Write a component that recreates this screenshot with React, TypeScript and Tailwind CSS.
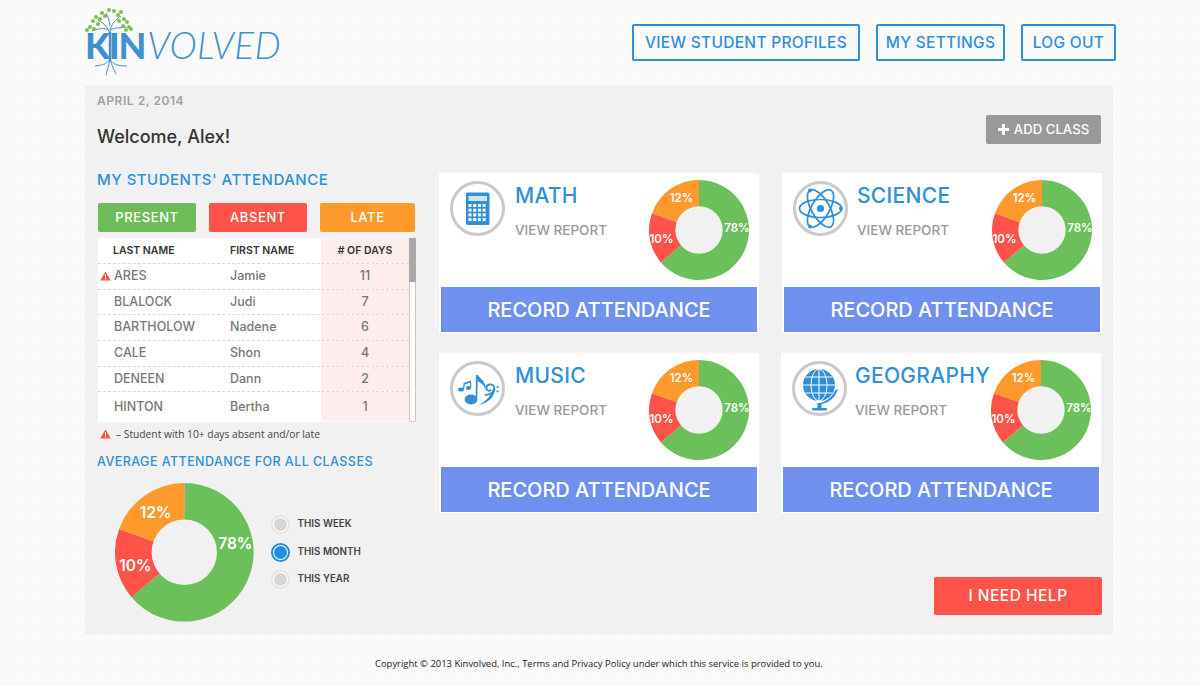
import type { ReactNode } from 'react'

const students = [
  { last: 'ARES', first: 'Jamie', days: 11, flag: true },
  { last: 'BLALOCK', first: 'Judi', days: 7 },
  { last: 'BARTHOLOW', first: 'Nadene', days: 6 },
  { last: 'CALE', first: 'Shon', days: 4 },
  { last: 'DENEEN', first: 'Dann', days: 2 },
  { last: 'HINTON', first: 'Bertha', days: 1 },
]

function polar(r: number, deg: number) {
  const a = ((deg - 90) * Math.PI) / 180
  return `${(r * Math.cos(a)).toFixed(2)} ${(r * Math.sin(a)).toFixed(2)}`
}

function slice(r: number, from: number, to: number) {
  const large = to - from > 180 ? 1 : 0
  return `M0 0 L${polar(r, from)} A${r} ${r} 0 ${large} 1 ${polar(r, to)} Z`
}

interface DonutProps {
  radius: number
  hole: number
  fontSize: number
  labels: [number, number][]
}

function Donut({ radius, hole, fontSize, labels }: DonutProps) {
  const texts = ['78%', '10%', '12%']
  return (
    <svg width={radius * 2} height={radius * 2} viewBox={`${-radius} ${-radius} ${radius * 2} ${radius * 2}`} className="shrink-0">
      <path d={slice(radius, 0, 229.6)} fill="#6cc05c" />
      <path d={slice(radius, 229.6, 289.7)} fill="#fd5349" />
      <path d={slice(radius, 289.7, 360)} fill="#fe9a2b" />
      <circle r={hole} fill="#f1f1f1" />
      {texts.map((t, i) => (
        <text
          key={t}
          x={labels[i][0]}
          y={labels[i][1]}
          fill="#fff"
          fontSize={fontSize}
          fontWeight={600}
          textAnchor="middle"
          dominantBaseline="central"
        >
          {t}
        </text>
      ))}
    </svg>
  )
}

function WarnIcon() {
  return (
    <svg width="11" height="10" viewBox="0 0 11 10" className="shrink-0">
      <path d="M5.5 0.4 L10.8 9.6 H0.2 Z" fill="#f2544a" />
      <rect x="5" y="3.2" width="1" height="3.4" fill="#fff" />
      <rect x="5" y="7.3" width="1" height="1.1" fill="#fff" />
    </svg>
  )
}

function CalcIcon() {
  const cells = []
  for (let r = 0; r < 4; r++) {
    for (let c = 0; c < 4; c++) {
      cells.push(<rect key={`${r}-${c}`} x={18.5 + c * 4.7} y={23 + r * 4.7} width="3" height="3" fill="#fff" />)
    }
  }
  return (
    <svg width="55" height="55" viewBox="0 0 55 55" className="shrink-0">
      <rect x="16" y="11.5" width="23.5" height="32.5" rx="1.5" fill="#2f8fd8" />
      <rect x="18.5" y="15" width="18.5" height="5" fill="#cfe5f6" />
      {cells}
    </svg>
  )
}

function AtomIcon() {
  return (
    <svg width="55" height="55" viewBox="0 0 55 55" fill="none" stroke="#2f8fd8" strokeWidth="1.7" className="shrink-0">
      <ellipse cx="27.5" cy="27.5" rx="21" ry="9" />
      <ellipse cx="27.5" cy="27.5" rx="21" ry="9" transform="rotate(60 27.5 27.5)" />
      <ellipse cx="27.5" cy="27.5" rx="21" ry="9" transform="rotate(120 27.5 27.5)" />
      <circle cx="27.5" cy="27.5" r="3.6" fill="#2f8fd8" stroke="none" />
      <circle cx="17" cy="9.5" r="1.9" fill="#2f8fd8" stroke="none" />
      <circle cx="48" cy="27.5" r="1.9" fill="#2f8fd8" stroke="none" />
      <circle cx="17" cy="45.5" r="1.9" fill="#2f8fd8" stroke="none" />
    </svg>
  )
}

function MusicIcon() {
  return (
    <svg width="55" height="55" viewBox="0 0 55 55" fill="#2f8fd8" className="shrink-0">
      <ellipse cx="21" cy="38.5" rx="6.4" ry="5" />
      <path d="M25.6 38 L26 14 L27.6 14 L34 21 L32.5 22.5 L27.8 18 L27.2 38 Z" />
      <path d="M27.5 15 C30 20 38 21 35 30 C35.5 24 31 22.5 27.8 20 Z" />
      <ellipse cx="11" cy="28.5" rx="2.9" ry="2.1" />
      <path d="M13 28 L13.6 22 L21 19.5 L21.4 26 L20.2 26 L19.9 21.8 L14.8 23.4 L14.2 28.5 Z" />
      <ellipse cx="18.6" cy="27" rx="2.6" ry="1.9" />
      <path
        d="M35 34 C41 34 46 30 44 25.5 C42.5 22 36.5 23 36.5 27 C36.5 30 40 30.5 41 28.5"
        fill="none"
        stroke="#2f8fd8"
        strokeWidth="1.8"
      />
      <path d="M44.5 27 C46 34 39 42 29 44 C36 40 42 34 43 27 Z" />
      <circle cx="47.5" cy="26" r="1.1" />
      <circle cx="47.5" cy="30.5" r="1.1" />
    </svg>
  )
}

function GlobeIcon() {
  return (
    <svg width="55" height="55" viewBox="0 0 55 55" fill="none" stroke="#fff" strokeWidth="1" className="shrink-0">
      <circle cx="27" cy="24" r="16" fill="#2f8fd8" stroke="none" />
      <ellipse cx="27" cy="24" rx="8" ry="16" />
      <path d="M27 8 V40 M11 24 H43 M13.5 16 H40.5 M13.5 32 H40.5" />
      <path d="M46 28 C43 38 35 44 24 43 C33 41.5 40 37 43.5 29 Z" fill="#2f8fd8" stroke="none" />
      <rect x="25.5" y="42" width="4" height="6" fill="#2f8fd8" stroke="none" />
      <rect x="20" y="47" width="15" height="2.4" rx="1" fill="#2f8fd8" stroke="none" />
    </svg>
  )
}

function TreeMark() {
  const leaves: [number, number][] = [
    [2, 22], [5, 19], [9, 21], [8, 13], [11, 9], [15, 11], [17, 5], [20, 8], [13, 16],
    [29, 3], [33, 7], [36, 4], [39, 11], [34, 13], [42, 14], [38, 18], [44, 19], [41, 22], [46, 21], [24, 2],
  ]
  return (
    <svg width="48" height="70" viewBox="0 0 48 70" className="absolute left-0 top-[8px]" fill="none">
      <path d="M25 52 V24" stroke="#3f92cf" strokeWidth="2.4" />
      <g stroke="#3f92cf" strokeWidth="1">
        <path d="M25 28 C24 20 20 16 13 12 M25 24 C26 16 30 12 36 8 M25 22 C28 20 34 20 41 19 M24 22 C20 20 14 20 7 23 M25 18 C24 12 23 8 21 5" />
        <path d="M25 51 C22 57 16 57 10 58 M25 51 C24 58 22 62 21 67 M25 51 C28 57 34 58 42 58 M25 51 C27 58 29 62 31 66" />
      </g>
      {leaves.map(([x, y]) => (
        <circle key={`${x}-${y}`} cx={x} cy={y} r="2" fill="#7fbf4d" />
      ))}
    </svg>
  )
}

function Logo() {
  return (
    <div className="relative h-[86px] w-[195px] shrink-0">
      <TreeMark />
      <div className="flex items-baseline pt-[21px] font-['Lato',sans-serif] leading-[48px] text-[#3f92cf]">
        <span className="text-[36px] font-black tracking-[-1.2px]">KIN</span>
        <span className="ml-[2px] text-[37px] font-light italic tracking-[0.3px]">VOLVED</span>
      </div>
    </div>
  )
}

function NavButton({ children, className }: { children: ReactNode; className: string }) {
  return (
    <a className={`flex h-[37px] items-center justify-center rounded-[2px] border-2 border-[#2f8fd8] text-[15.5px] font-medium tracking-[0.3px] text-[#2f8fd8] ${className}`}>
      {children}
    </a>
  )
}

function FilterButton({ children, className }: { children: ReactNode; className: string }) {
  return (
    <button className={`flex h-[29px] items-center justify-center rounded-[2px] text-[13px] font-medium tracking-[0.6px] text-white ${className}`}>
      {children}
    </button>
  )
}

function StudentTable() {
  return (
    <div className="relative mt-[6px] flex h-[184px] w-[318px] bg-white">
      <div className="w-[311px]">
        <div className="grid h-[26px] grid-cols-[132px_91px_88px] items-center border-b border-dashed border-[#d8d8d8] text-[10.5px] font-semibold text-[#333]">
          <span className="pl-[15px]">LAST NAME</span>
          <span>FIRST NAME</span>
          <span className="flex h-full items-center justify-center bg-[#fdeeed]"># OF DAYS</span>
        </div>
        {students.map((s, i) => (
          <div
            key={s.last}
            className={`relative grid grid-cols-[132px_91px_88px] items-center text-[12.5px] font-medium text-[#777] ${i < 5 ? 'h-[25.7px] border-b border-dashed border-[#d8d8d8]' : 'h-[29px]'}`}
          >
            {s.flag && (
              <span className="absolute left-[2px] top-[7px] flex">
                <WarnIcon />
              </span>
            )}
            <span className="pl-[16px]">{s.last}</span>
            <span>{s.first}</span>
            <span className="flex h-full items-center justify-center bg-[#fdeeed]">{s.days}</span>
          </div>
        ))}
      </div>
      <div className="w-[7px] rounded-[1px] border border-[#c9c9c9] bg-white">
        <div className="-m-px h-[44px] bg-[#a9a9a9]" />
      </div>
    </div>
  )
}

function RadioRow({ label, active }: { label: string; active?: boolean }) {
  return (
    <div className="flex h-[27.5px] items-center gap-[8px]">
      <span
        className={`flex h-[19px] w-[19px] items-center justify-center rounded-full border-2 bg-white ${active ? 'border-[#1f8fe0]' : 'border-[#e4e4e4]'}`}
      >
        <span className={`h-[13px] w-[13px] rounded-full ${active ? 'bg-[#1f8fe0]' : 'bg-[#d6d6d6]'}`} />
      </span>
      <span className="text-[9.8px] font-semibold text-[#444]">{label}</span>
    </div>
  )
}

interface ClassCardProps {
  title: string
  icon: ReactNode
  className?: string
  titleGap?: string
}

function ClassCard({ title, icon, className = '', titleGap = 'ml-[10px]' }: ClassCardProps) {
  return (
    <div className={`flex h-[160px] w-[320px] flex-col bg-white ${className}`}>
      <div className="flex flex-1 justify-between pr-[10px] pl-[11px] pt-[7px]">
        <div className="flex">
          <div className="mt-[1px] flex h-[55px] w-[55px] items-center justify-center rounded-full border-[3px] border-[#c9c9c9]">
            {icon}
          </div>
          <div className={titleGap}>
            <h3 className="mt-[1px] text-[21px] leading-[30px] font-medium tracking-[0.3px] text-[#2f8fd8]">{title}</h3>
            <a className="mt-[11px] block text-[13.5px] leading-[16px] font-medium text-[#999]">VIEW REPORT</a>
          </div>
        </div>
        <Donut
          radius={50}
          hole={23.7}
          fontSize={11.5}
          labels={[
            [38, -2],
            [-37.5, 8.5],
            [-17.5, -32.5],
          ]}
        />
      </div>
      <button className="mx-[2px] mb-[1px] flex h-[45px] items-center justify-center bg-[#7090ef] text-[20px] font-medium text-white">
        RECORD ATTENDANCE
      </button>
    </div>
  )
}

export default function App() {
  return (
    <div className="flex h-[686px] w-[1200px] flex-col overflow-hidden bg-[#fbfbfb] bg-[linear-gradient(#f8f8f8_1px,transparent_1px),linear-gradient(90deg,#f8f8f8_1px,transparent_1px)] bg-[length:5px_5px] font-['Inter',sans-serif]">
      <header className="flex h-[86px] shrink-0 justify-between pr-[84px] pl-[85px]">
        <Logo />
        <nav className="flex gap-[16px] pt-[24px]">
          <NavButton className="w-[228px]">VIEW STUDENT PROFILES</NavButton>
          <NavButton className="w-[129px]">MY SETTINGS</NavButton>
          <NavButton className="w-[95px]">LOG OUT</NavButton>
        </nav>
      </header>

      <main className="mx-[85px] flex h-[548px] w-[1028px] flex-col bg-[#f1f1f1] px-[12px] pb-[12px]">
        <div className="flex justify-between">
          <div>
            <p className="pt-[7px] text-[12px] leading-[16px] font-semibold tracking-[0.55px] text-[#a0a0a0]">APRIL 2, 2014</p>
            <h1 className="mt-[15px] text-[18px] leading-[26px] font-medium text-[#333]">Welcome, Alex!</h1>
          </div>
          <button className="mt-[29px] flex h-[29px] w-[115px] items-center justify-center gap-[5px] rounded-[2px] bg-[#999] text-[13.2px] font-medium text-white">
            <svg width="11" height="11" viewBox="0 0 11 11" fill="#fff">
              <rect x="4" width="3" height="11" />
              <rect y="4" width="11" height="3" />
            </svg>
            ADD CLASS
          </button>
        </div>

        <div className="flex flex-1 pt-[20px]">
          <section className="w-[342px] shrink-0">
            <h2 className="text-[15px] leading-[20px] font-medium tracking-[0.5px] text-[#2f8fd8]">MY STUDENTS&apos; ATTENDANCE</h2>
            <div className="mt-[13px] flex w-[318px] justify-between pl-px">
              <FilterButton className="w-[98px] bg-[#6cbd58]">PRESENT</FilterButton>
              <FilterButton className="w-[98px] bg-[#fd5349]">ABSENT</FilterButton>
              <FilterButton className="w-[95px] bg-[#fe9a2b]">LATE</FilterButton>
            </div>
            <div className="pl-px">
              <StudentTable />
            </div>
            <p className="mt-[5px] flex items-center gap-[5px] pl-[3px] font-['Open_Sans',sans-serif] text-[10.25px] leading-[14px] text-[#444]">
              <WarnIcon /> – Student with 10+ days absent and/or late
            </p>
            <h2 className="mt-[13px] text-[12.5px] leading-[16px] font-medium tracking-[0.45px] text-[#2f8fd8]">AVERAGE ATTENDANCE FOR ALL CLASSES</h2>
            <div className="mt-[13px] flex items-center pl-[18px]">
              <Donut
                radius={69.3}
                hole={32.7}
                fontSize={15.5}
                labels={[
                  [51, -8.7],
                  [-49, 13],
                  [-28.6, -39.7],
                ]}
              />
              <div className="ml-[17px]">
                <RadioRow label="THIS WEEK" />
                <RadioRow label="THIS MONTH" active />
                <RadioRow label="THIS YEAR" />
              </div>
            </div>
          </section>

          <section className="flex flex-1 flex-col">
            <div className="grid grid-cols-[343px_320px] gap-y-[20px] pt-[3px]">
              <ClassCard title="MATH" icon={<CalcIcon />} />
              <ClassCard title="SCIENCE" icon={<AtomIcon />} titleGap="ml-[9px]" />
              <ClassCard title="MUSIC" icon={<MusicIcon />} />
              <ClassCard title="GEOGRAPHY" icon={<GlobeIcon />} className="-ml-px" titleGap="ml-[8px]" />
            </div>
            <button className="mt-auto mb-[7px] flex h-[38px] w-[168px] items-center justify-center self-end rounded-[2px] bg-[#fd5349] text-[15.5px] font-medium tracking-[0.5px] text-white">
              I NEED HELP
            </button>
          </section>
        </div>
      </main>

      <footer className="pt-[23px] pl-[375px] font-['Open_Sans',sans-serif] text-[9.45px] leading-[14px] text-[#222]">
        Copyright © 2013 Kinvolved, Inc., Terms and Privacy Policy under which this service is provided to you.
      </footer>
    </div>
  )
}
